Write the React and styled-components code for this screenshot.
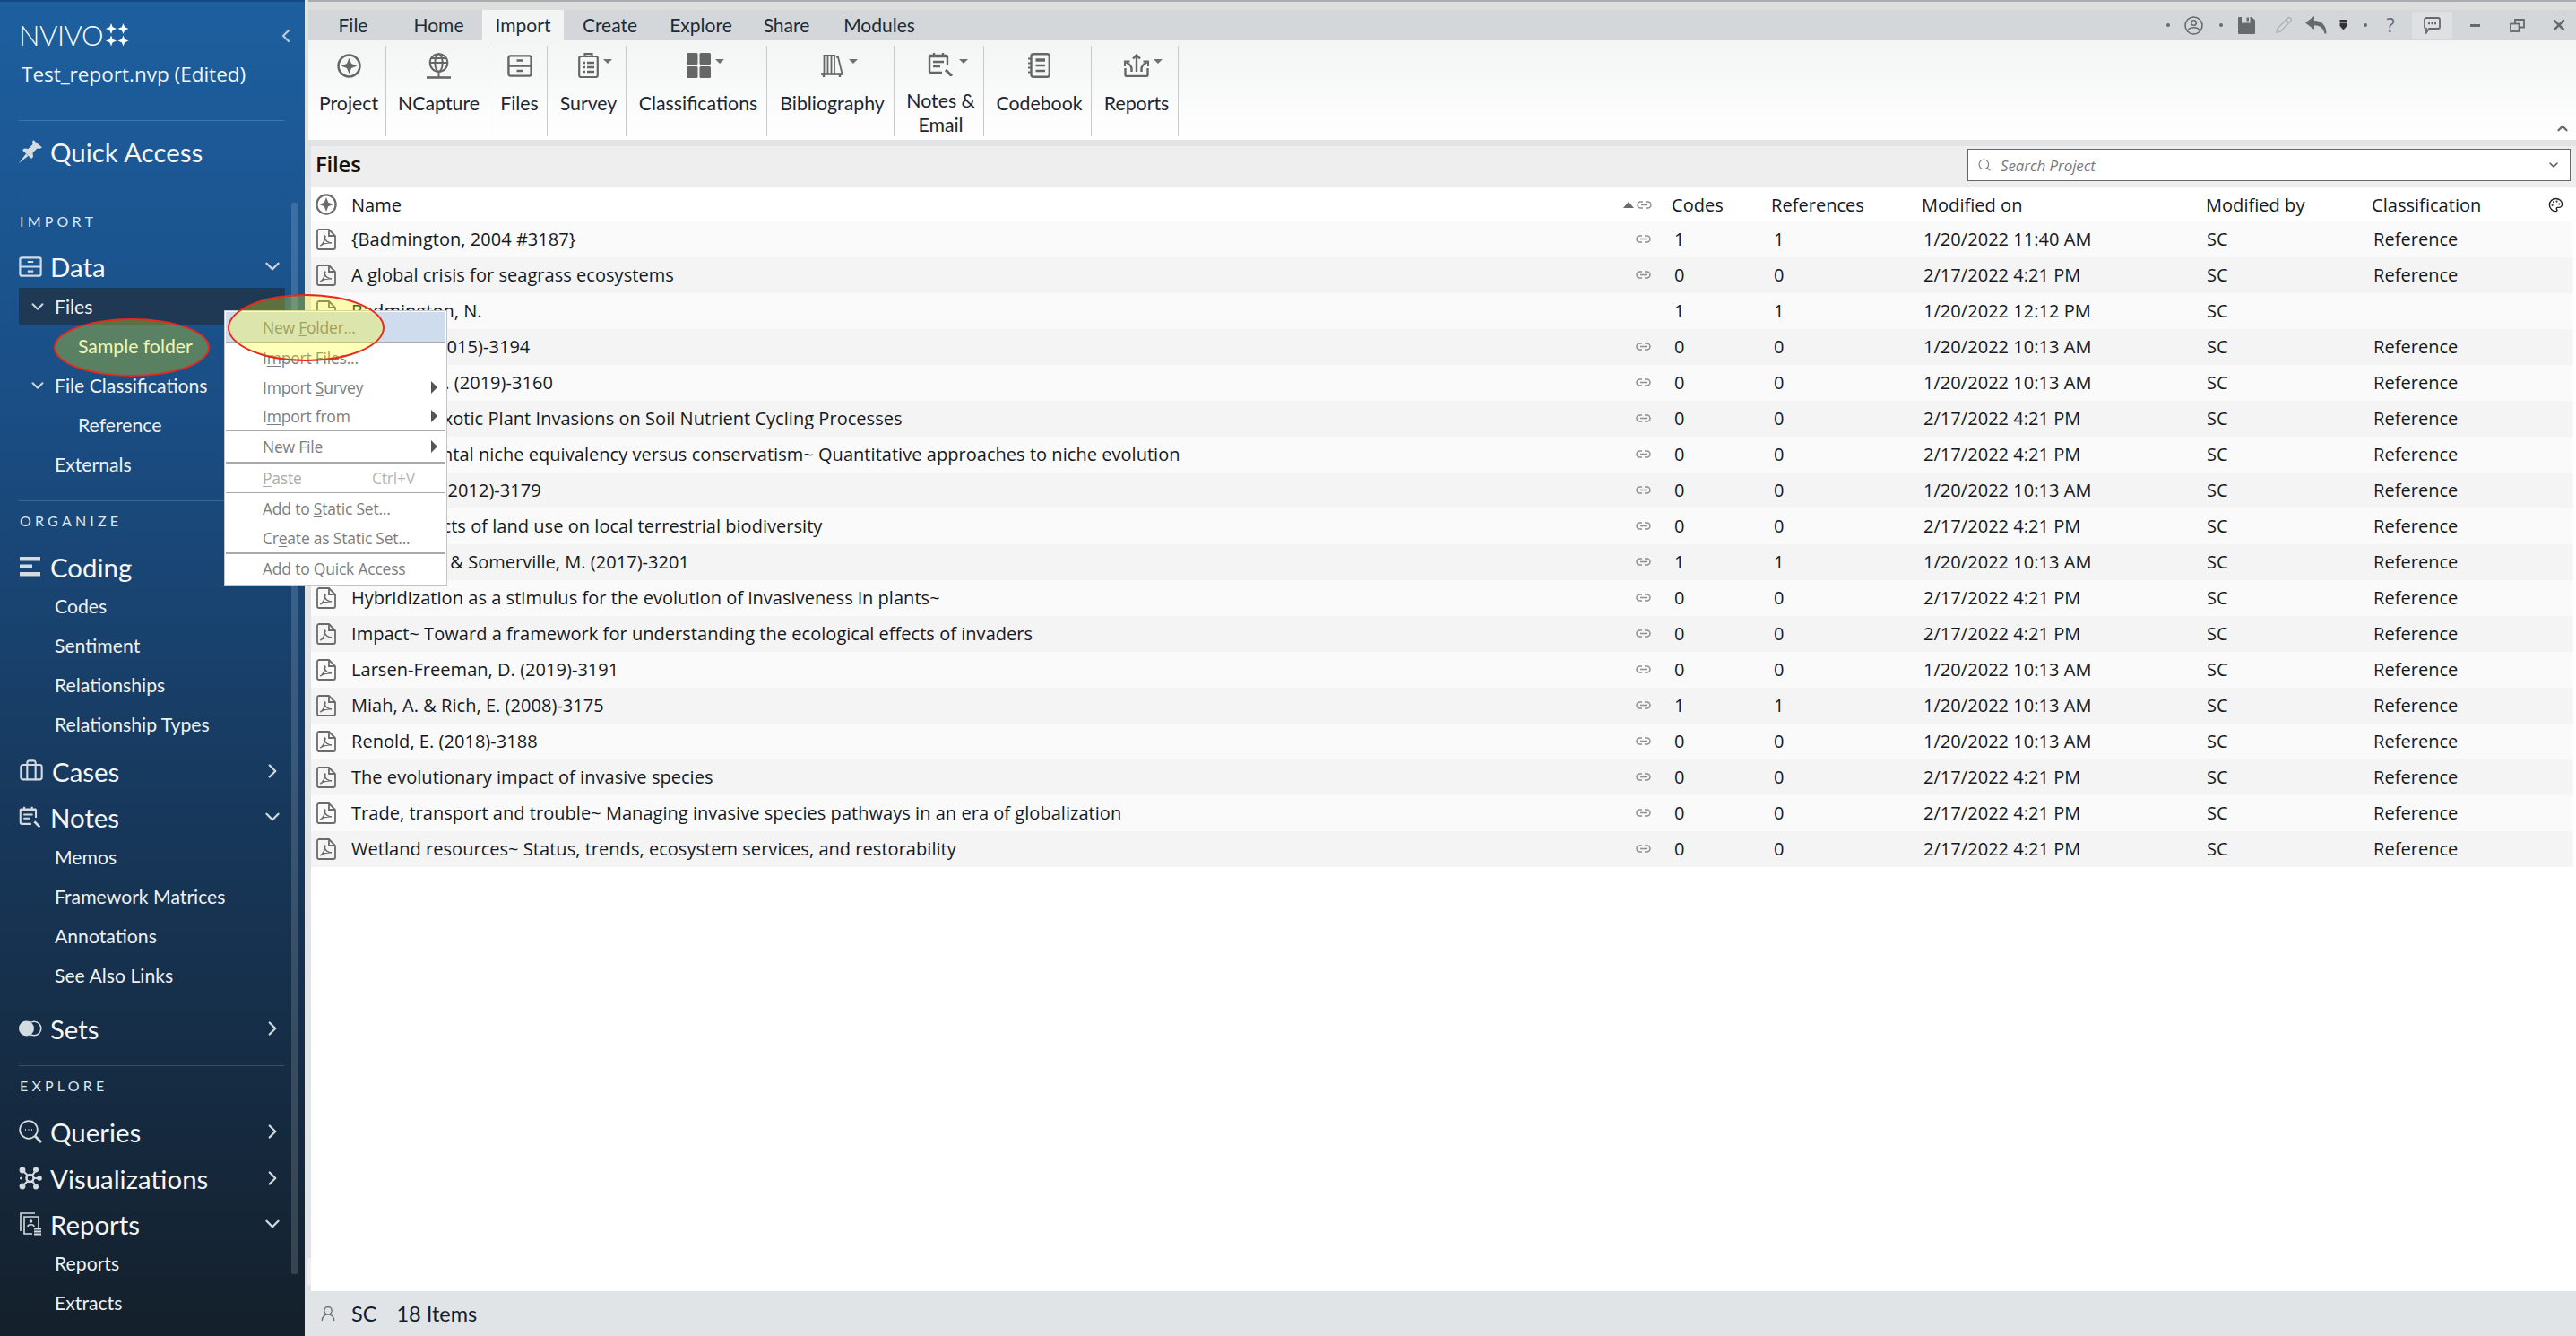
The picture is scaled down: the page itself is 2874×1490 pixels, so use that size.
import React from 'react';
import styled, { createGlobalStyle } from 'styled-components';
import { ChevronDown, ChevronRight, ChevronLeft, ChevronUp, Search, Palette, Pencil, X, Briefcase, UserRound } from 'lucide-react';

const ui = '"Open Sans", "Noto Sans", sans-serif';
const lato = 'Lato, "Open Sans", sans-serif';

const Global = createGlobalStyle`
  html, body { margin: 0; padding: 0; height: 100%; overflow: hidden; }
  #root { height: 100%; }
  * { box-sizing: border-box; }
  svg { flex-shrink: 0; }
`;

const Page = styled.div`
  position: relative;
  display: flex;
  height: 100vh;
  overflow: hidden;
  font-family: ${ui};
`;

/* sidebar */
const Side = styled.aside`
  position: relative;
  flex: 0 0 340px;
  padding-left: 21px;
  background: linear-gradient(180deg, #1d5f9f 0%, #1a4e85 30%, #17375a 62%, #14202b 100%);
  border-top: 2px solid #134a85;
  color: #f2f5f8;
  font-family: ${lato};
`;
const Brand = styled.div`
  height: 132px;
  padding-top: 21px;
`;
const LogoRow = styled.div`
  display: flex;
  align-items: center;
  gap: 3px;
  height: 32px;
  font-size: 31px;
  font-weight: 300;
  letter-spacing: -0.4px;
  color: #fff;
`;
const ProjectName = styled.div`
  margin: 12px 0 0 3px;
  font-family: ${ui};
  font-size: 22.5px;
  line-height: 32px;
`;
const Collapse = styled.span`
  position: absolute;
  left: 307px;
  top: 26px;
  color: #b9c8d8;
`;
const Divider = styled.div`
  width: 296px;
  height: 1px;
  margin-top: ${({ $gap }) => $gap || 0}px;
  background: rgba(255, 255, 255, 0.16);
`;
const SectionLabel = styled.div`
  height: 24px;
  margin-top: ${({ $gap }) => $gap}px;
  padding-left: 1px;
  font-size: 16px;
  line-height: 24px;
  letter-spacing: 4.2px;
  color: #dfe7ef;
`;
const Head = styled.div`
  display: flex;
  align-items: center;
  width: 297px;
  height: 46px;
  margin-top: ${({ $gap }) => $gap || 0}px;
  padding-bottom: 2px;
  font-size: 29.4px;
  color: #f4f6f8;
`;
const HeadIcon = styled.span`
  display: flex;
  justify-content: center;
  flex: 0 0 26px;
  margin-right: 9px;
  color: #d5dbe2;
`;
const HeadCaret = styled.span`
  display: flex;
  margin-left: auto;
  margin-right: 1px;
  color: #cfd6dd;
`;
const Sub = styled.div`
  display: flex;
  align-items: center;
  width: 297px;
  height: ${({ $active }) => ($active ? 41 : 44)}px;
  margin-bottom: ${({ $active }) => ($active ? 3 : 0)}px;
  margin-top: ${({ $gap }) => $gap || 0}px;
  padding-left: ${({ $deep }) => ($deep ? 66 : 40)}px;
  padding-bottom: ${({ $active }) => ($active ? 0 : 2)}px;
  background: ${({ $active }) => ($active ? '#1f3955' : 'transparent')};
  font-size: 21.2px;
  color: #eef1f4;
`;
const SubCaret = styled.span`
  display: flex;
  width: 22px;
  margin-left: -30px;
  margin-right: 8px;
  color: #cfd6dd;
`;
const ScrollThumb = styled.div`
  position: absolute;
  left: 325px;
  top: 224px;
  width: 7px;
  height: 1195px;
  border-radius: 2px;
  background: rgba(255, 255, 255, 0.15);
`;

/* main column */
const Main = styled.main`
  display: flex;
  flex: 1;
  flex-direction: column;
  min-width: 0;
  background: #e1e4e7;
`;
const TopStrip = styled.div`
  height: 11px;
  margin-left: 4px;
  background: #dcdddd;
  border-top: 2px solid #a9adb0;
`;
const TabBar = styled.div`
  display: flex;
  align-items: stretch;
  height: 34px;
  padding-left: 3px;
  margin-left: 4px;
  padding-right: 7px;
  background: #d4d7da;
  font-family: ${lato};
  font-size: 21px;
  color: #1d2b36;
`;
const Tab = styled.div`
  display: flex;
  justify-content: center;
  align-items: center;
  width: ${({ $w }) => $w}px;
  padding-bottom: 1px;
  background: ${({ $on }) => ($on ? '#f3f4f4' : 'transparent')};
`;
const WindowTools = styled.div`
  display: flex;
  align-items: center;
  margin-left: auto;
`;
const Tool = styled.span`
  display: flex;
  justify-content: center;
  align-items: center;
  width: ${({ $w }) => $w || 24}px;
  height: 31px;
  margin-left: ${({ $gap }) => $gap || 0}px;
  background: ${({ $on }) => ($on ? '#dfe0e1' : 'transparent')};
  color: ${({ $faint }) => ($faint ? '#a9abad' : '#666a6e')};
  font-family: ${ui};
  font-size: 21px;
`;
const Ribbon = styled.div`
  position: relative;
  display: flex;
  height: 111px;
  margin-left: 4px;
  padding: 6px 0 4px;
  background: linear-gradient(180deg, #f3f4f4 0%, #ffffff 100%);
  font-family: ${lato};
  font-size: 21.3px;
  color: #1d2630;
`;
const RibbonCell = styled.div`
  display: flex;
  flex-direction: column;
  align-items: center;
  width: ${({ $w }) => $w}px;
  padding-left: 4px;
  border-right: 1px solid #c9cacb;
  text-align: center;
  line-height: 25px;
`;
const IconSlot = styled.div`
  position: relative;
  display: flex;
  justify-content: center;
  align-items: center;
  height: 38px;
  margin: 3px 0 11px;
  color: #666;
`;
const Drop = styled.i`
  position: absolute;
  left: calc(100% + 5px);
  top: 12px;
  border-left: 5px solid transparent;
  border-right: 5px solid transparent;
  border-top: 5px solid #707070;
`;
const SecondLine = styled.span`
  margin-top: 2px;
`;
const Fold = styled.span`
  position: absolute;
  right: 6px;
  bottom: 4px;
  display: flex;
  color: #666;
`;

/* file list */
const Panel = styled.section`
  position: relative;
  display: flex;
  flex: 1;
  flex-direction: column;
  margin: 7px 0 0 7px;
  background: #fff;
`;
const TitleBar = styled.div`
  display: flex;
  justify-content: space-between;
  align-items: center;
  flex: 0 0 46px;
  padding: 0 6px 4px 5px;
  background: #eeeeee;
`;
const Title = styled.h2`
  margin: 0 0 4px;
  font-size: 24px;
  font-weight: 600;
  letter-spacing: -0.2px;
  color: #111;
`;
const SearchBox = styled.div`
  display: flex;
  align-items: center;
  width: 673px;
  height: 36px;
  padding: 0 10px;
  background: #fff;
  border: 1.5px solid #66696c;
  font-size: 17px;
  font-style: italic;
  color: #77797b;
`;
const SearchText = styled.span`
  margin-left: 10px;
  letter-spacing: -0.1px;
`;
const SearchCaret = styled.span`
  display: flex;
  margin-left: auto;
  color: #555;
`;
const Grid = styled.div`
  display: grid;
  grid-template-columns: 45px 1428px 45px 111px 168px 317px 185px 1fr 29px;
  align-items: center;
  margin-right: 3px;
  font-size: 20px;
  letter-spacing: 0.04px;
  color: #14191f;
`;
const HeaderRow = styled(Grid)`
  height: 38px;
  background: #fff;
`;
const Row = styled(Grid)`
  height: 40px;
  padding-bottom: 1px;
  background: ${({ $odd }) => ($odd ? '#fafafa' : '#f4f4f4')};
`;
const IconCell = styled.span`
  display: flex;
  justify-content: center;
  padding-right: 11px;
  color: ${({ $dark }) => ($dark ? '#222' : '#6b6b6b')};
`;
const Cell = styled.span`
  padding-left: ${({ $in }) => $in || 0}px;
  white-space: nowrap;
`;
const LinkCell = styled.span`
  display: flex;
  justify-content: flex-end;
  padding-right: 23px;
  color: #909090;
`;
const SortMark = styled.span`
  display: flex;
  align-items: center;
  justify-content: flex-end;
  gap: 3px;
  padding-right: 22px;
  color: #909090;
`;
const Triangle = styled.i`
  border-left: 6px solid transparent;
  border-right: 6px solid transparent;
  border-bottom: 7px solid #6b6b6b;
`;
const Grip = styled.div`
  position: absolute;
  left: -4px;
  bottom: 7px;
  width: 4px;
  height: 30px;
  background: #f0f0f0;
`;
const StatusBar = styled.footer`
  display: flex;
  align-items: center;
  flex: 0 0 50px;
  padding-left: 16px;
  font-family: ${lato};
  font-size: 23.5px;
  color: #14202c;
`;
const StatusUser = styled.span`
  display: flex;
  margin-right: 16px;
  color: #6f6f6f;
`;
const StatusCount = styled.span`
  margin-left: 22px;
`;

/* context menu and the marker strokes drawn over the shot */
const Menu = styled.div`
  position: absolute;
  left: 250px;
  top: 346px;
  width: 249px;
  height: 307px;
  padding: 1px;
  background: #fff;
  border: 1px solid #c5c5c5;
  font-size: 17.5px;
  letter-spacing: -0.22px;
  color: #7d7d7d;
`;
const MenuItem = styled.div`
  position: relative;
  display: flex;
  align-items: center;
  height: ${({ $h }) => $h || 32}px;
  padding-left: 41px;
  padding-right: 34px;
  background: ${({ $on }) => ($on ? '#cfdcee' : 'transparent')};
  color: ${({ $off }) => ($off ? '#ababab' : 'inherit')};
  u { text-underline-offset: 2px; }
`;
const MenuSep = styled.div`
  height: 1.5px;
  background: #a9a9a9;
`;
const Shortcut = styled.span`
  margin-left: auto;
  color: #b5b5b5;
`;
const SubArrow = styled.i`
  position: absolute;
  right: 9px;
  top: 50%;
  margin-top: -7px;
  border-top: 7px solid transparent;
  border-bottom: 7px solid transparent;
  border-left: 7px solid #555;
`;
const Marker = styled.div`
  position: absolute;
  border: 2px solid #e8291c;
  border-radius: 50%;
  background: rgba(255, 255, 0, 0.28);
  pointer-events: none;
`;
const FolderMarker = styled(Marker)`
  left: 60px;
  top: 355px;
  width: 174px;
  height: 65px;
`;
const MenuMarker = styled(Marker)`
  left: 254px;
  top: 328px;
  width: 175px;
  height: 75px;
`;

/* drawings */
const StarCircle = ({ size = 27 }) => (
  <svg width={size} height={size} viewBox="0 0 28 28" fill="none">
    <circle cx="14" cy="14" r="12.4" stroke="currentColor" strokeWidth="2.6" />
    <path d="M14 4.800 16.600 11.400 23.200 14 16.600 16.600 14 23.200 11.400 16.600 4.800 14 11.400 11.400z" fill="currentColor" />
  </svg>
);
const Globe = () => (
  <svg width="27" height="29" viewBox="0 0 27 29" fill="none" stroke="currentColor" strokeWidth="2">
    <circle cx="13.500" cy="11" r="9.800" />
    <ellipse cx="13.500" cy="11" rx="4.200" ry="9.800" />
    <path d="M3.700 11h19.600M5 6h17M13.500 21v6" />
    <path d="M0 27.500h27" strokeWidth="2.600" />
  </svg>
);
const Cabinet = ({ size = 28, height = 25 }) => (
  <svg width={size} height={height} viewBox="0 0 28 25" fill="none" stroke="currentColor" strokeWidth="2.4">
    <rect x="1.400" y="1.400" width="25.200" height="22.200" rx="2" />
    <path d="M1.400 12.500h25.200M10.500 6.500h7M10.500 18h7" />
  </svg>
);
const Survey = () => (
  <svg width="23" height="28" viewBox="0 0 23 28" fill="none" stroke="currentColor" strokeWidth="2.200">
    <rect x="1.200" y="4" width="20.600" height="23" rx="2" />
    <path d="M7.500 4V1.200h8V4" />
    <path d="M5 11h3M10 11h8M5 16h3M10 16h8M5 21h3M10 21h8" strokeWidth="2.300" />
  </svg>
);
const Squares = () => (
  <svg width="27" height="28" viewBox="0 0 27 28" fill="currentColor">
    <rect x="0" y="0" width="12.500" height="13" rx="1.500" />
    <rect x="14.500" y="0" width="12.500" height="13" rx="1.500" />
    <rect x="0" y="15" width="12.500" height="13" rx="1.500" />
    <rect x="14.500" y="15" width="12.500" height="13" rx="1.500" />
  </svg>
);
const Books = () => (
  <svg width="26" height="25" viewBox="0 0 26 25" fill="none" stroke="currentColor" strokeWidth="1.800">
    <path d="M3.500 21V1h4v20M7.500 21V1h4v20M11.500 21V1h3.500v20M17 3l2-.5 4.500 18.500" />
    <path d="M0 21.500h25" strokeWidth="2.600" />
    <path d="M3 22v3M21 22v3" strokeWidth="2.400" />
  </svg>
);
const NoteGlass = ({ size = 30 }) => (
  <svg width={size} height={size * 0.93} viewBox="0 0 30 28" fill="none" stroke="currentColor" strokeWidth="2.400">
    <path d="M16 23H3.500A1.500 1.500 0 0 1 2 21.500V5h20v10" />
    <path d="M7 1v5M17 1v5M2 4h20M6 11h12M6 16h8" />
    <path d="M20 20l7 7" strokeWidth="3" />
  </svg>
);
const Notebook = () => (
  <svg width="25" height="28" viewBox="0 0 25 28" fill="none" stroke="currentColor" strokeWidth="2.400">
    <rect x="3.500" y="1.200" width="20.300" height="25.600" rx="2.500" />
    <path d="M8.500 8h10.500" strokeWidth="3.500" />
    <path d="M8.500 14h10.500M8.500 20h10.500" />
    <path d="M0 6.500h4M0 11.500h4M0 16.500h4M0 21.500h4" strokeWidth="2" />
  </svg>
);
const Export = () => (
  <svg width="28" height="26" viewBox="0 0 28 26" fill="none" stroke="currentColor" strokeWidth="2.400">
    <path d="M1.500 16v7.500A1.500 1.500 0 0 0 3 25h22a1.500 1.500 0 0 0 1.500-1.500V16" />
    <path d="M14 20V2M10 5.500l4-4 4 4" />
    <path d="M8.500 20v-3c0-3-3-6-6-7.500M19.500 20v-3c0-3 3-6 6-7.500" />
    <path d="M1 14V8.500h5.500M27 14V8.500h-5.500" strokeWidth="2" />
  </svg>
);
const PdfDoc = ({ plain }) => (
  <svg width="22" height="24" viewBox="0 0 22 24" fill="none" stroke="currentColor" strokeWidth="1.800">
    <path d="M14 1H3a2 2 0 0 0-2 2v18a2 2 0 0 0 2 2h16a2 2 0 0 0 2-2V8z" />
    <path d="M14 1v7h7" />
    {!plain && <path d="M4 19c3-1 5-5 6-10 .3-1.800-1.500-1.500-1 .5 .8 3.500 3 6 8 6.500-4-.5-9 .5-13 3z" strokeWidth="1.300" />}
  </svg>
);
const ChainLink = () => (
  <svg width="17" height="9" viewBox="0 0 17 9" fill="none" stroke="currentColor" strokeWidth="1.500">
    <path d="M7 1H4.500a3.500 3.500 0 0 0 0 7H7M10 1h2.500a3.500 3.500 0 0 1 0 7H10M5 4.500h7" />
  </svg>
);
const Sparkles = () => (
  <svg width="26" height="26" viewBox="0 0 26 26" fill="#fff">
    <path d="M6 0l1.700 4.300L12 6 7.700 7.700 6 12 4.300 7.700 0 6l4.300-1.700z" />
    <path d="M19.500 0l1.700 4.300L25.500 6l-4.300 1.700L19.500 12l-1.700-4.300L13.500 6l4.300-1.700z" />
    <path d="M6 13.500l1.700 4.300L12 19.500l-4.300 1.700L6 25.500l-1.700-4.300L0 19.500l4.300-1.700z" />
    <path d="M19.500 13.500l1.700 4.300 4.300 1.700-4.300 1.700-1.700 4.300-1.700-4.300-4.300-1.700 4.300-1.700z" />
  </svg>
);
const PinIcon = () => (
  <svg width="26" height="26" viewBox="0 0 26 26" fill="currentColor">
    <path d="M16 0 26 8.500l-3 1.500-2.500-.5-5 5 .5 4.500-2 2L4 11.500l2-2 4.500.5 5-5-.5-2.500z" />
    <path d="M8 15.500 0 26l10.500-8z" />
  </svg>
);
const Bars = () => (
  <svg width="24" height="22" viewBox="0 0 24 22" fill="currentColor">
    <rect x="0" y="0" width="23" height="4.500" />
    <rect x="0" y="8.500" width="14" height="4.500" />
    <rect x="0" y="17" width="23" height="4.500" />
  </svg>
);
const SetCircles = () => (
  <svg width="26" height="18" viewBox="0 0 26 18">
    <circle cx="17" cy="9" r="7.800" fill="none" stroke="currentColor" strokeWidth="1.600" />
    <circle cx="8.500" cy="9" r="8.500" fill="currentColor" />
  </svg>
);
const QueryGlass = () => (
  <svg width="26" height="26" viewBox="0 0 26 26" fill="none" stroke="currentColor" strokeWidth="1.800">
    <circle cx="11" cy="11" r="9.800" />
    <path d="M18 18l7 7" strokeWidth="2.800" />
    <path d="M7 11h.800M10.600 11h.800M14.200 11h.800" strokeWidth="1.800" />
  </svg>
);
const NodeMap = () => (
  <svg width="26" height="26" viewBox="0 0 26 26" fill="currentColor">
    <circle cx="4" cy="4" r="3.400" /><circle cx="19" cy="3.500" r="3" />
    <circle cx="23" cy="13" r="2.800" /><circle cx="4" cy="22" r="3.400" /><circle cx="19" cy="22.500" r="3" />
    <circle cx="2.500" cy="13" r="1.500" />
    <circle cx="12.500" cy="13" r="4" fill="none" stroke="currentColor" strokeWidth="2.500" />
    <path d="M4 4l6 6M19 4l-4 6M23 13h-7M4 22l6-6M19 22l-4-6" stroke="currentColor" strokeWidth="2.200" />
  </svg>
);
const ReportStack = () => (
  <svg width="26" height="26" viewBox="0 0 26 26" fill="none" stroke="currentColor" strokeWidth="1.600">
    <path d="M2 21V1h16" />
    <path d="M15 24H6V5h16v12" />
    <circle cx="13.500" cy="10" r="1.800" fill="currentColor" stroke="none" />
    <path d="M10 16c0-3 7-3 7 0" />
    <path d="M17 18.500h8M17 21.500h8M17 24.500h8" strokeWidth="2" />
  </svg>
);
const Floppy = () => (
  <svg width="19" height="19" viewBox="0 0 19 19" fill="currentColor">
    <path d="M1 0h3v6.500h9.500V0h1.500L19 3.500V18a1 1 0 0 1-1 1H1a1 1 0 0 1-1-1V1a1 1 0 0 1 1-1z" />
    <rect x="9.500" y="0.500" width="2.500" height="4" />
  </svg>
);
const UndoArrow = () => (
  <svg width="24" height="20" viewBox="0 0 24 20" fill="currentColor">
    <path d="M10 0 0 7.500 10 15v-4.800c6 0 10 2.800 11.500 9.300h2C23.500 10 18 5 10 5z" />
  </svg>
);
const PenMark = () => (
  <svg width="9" height="12" viewBox="0 0 9 12" fill="#333">
    <rect x="0.500" y="0" width="8" height="2" />
    <path d="M0.500 3.500h8V7L4.500 11.500.5 7z" />
  </svg>
);
const Dot = () => (
  <svg width="6" height="6" viewBox="0 0 6 6"><circle cx="3" cy="3" r="2" fill="currentColor" /></svg>
);
const UserCircle = () => (
  <svg width="21" height="21" viewBox="0 0 21 21" fill="none" stroke="currentColor" strokeWidth="1.600">
    <circle cx="10.500" cy="10.500" r="9.500" />
    <circle cx="10.500" cy="7.500" r="2.800" />
    <path d="M3.500 16.500c1.500-3 3.500-3.800 7-3.800s5.500.8 7 3.800" />
  </svg>
);
const Comment = () => (
  <svg width="19" height="19" viewBox="0 0 19 19" fill="none" stroke="currentColor" strokeWidth="1.800">
    <path d="M3 1h13a2 2 0 0 1 2 2v8a2 2 0 0 1-2 2H6l-3 4.500V13a2 2 0 0 1-2-2V3a2 2 0 0 1 2-2z" />
    <path d="M5 7h2M8.500 7h2M12 7h2" strokeWidth="2.400" />
  </svg>
);
const Restore = () => (
  <svg width="17" height="15" viewBox="0 0 17 15" fill="none" stroke="currentColor" strokeWidth="1.800">
    <rect x="1" y="5.500" width="9.500" height="8.500" />
    <path d="M6 5.500V1h10v8.500h-5.500" />
  </svg>
);

const ribbon = [
  { w: 87, label: 'Project', icon: <StarCircle /> },
  { w: 114, label: 'NCapture', icon: <Globe /> },
  { w: 66, label: 'Files', icon: <Cabinet /> },
  { w: 88, label: 'Survey', icon: <Survey />, drop: true },
  { w: 157, label: 'Classifications', icon: <Squares />, drop: true },
  { w: 142, label: 'Bibliography', icon: <Books />, drop: true },
  { w: 100, label: 'Notes &', second: 'Email', icon: <NoteGlass />, drop: true },
  { w: 120, label: 'Codebook', icon: <Notebook /> },
  { w: 97, label: 'Reports', icon: <Export />, drop: true },
];

const tabs = [
  ['File', 94], ['Home', 97], ['Import', 91, true], ['Create', 103],
  ['Explore', 100], ['Share', 91], ['Modules', 116],
];

const OLD = '1/20/2022 10:13 AM';
const NEW = '2/17/2022 4:21 PM';
const rows = [
  ['{Badmington, 2004 #3187}', 1, '1/20/2022 11:40 AM'],
  ['A global crisis for seagrass ecosystems', 0, NEW],
  ['Badmington, N.', 1, '1/20/2022 12:12 PM', 'plain'],
  ['Bauer, K. (2015)-3194', 0, OLD],
  ['Campbell, J. (2019)-3160', 0, OLD],
  ['Effects of Exotic Plant Invasions on Soil Nutrient Cycling Processes', 0, NEW],
  ['Environmental niche equivalency versus conservatism~ Quantitative approaches to niche evolution', 0, NEW],
  ['Fowler, M. (2012)-3179', 0, OLD],
  ['Global effects of land use on local terrestrial biodiversity', 0, NEW],
  ['Hobbs, R. J. & Somerville, M. (2017)-3201', 1, OLD],
  ['Hybridization as a stimulus for the evolution of invasiveness in plants~', 0, NEW],
  ['Impact~ Toward a framework for understanding the ecological effects of invaders', 0, NEW],
  ['Larsen-Freeman, D. (2019)-3191', 0, OLD],
  ['Miah, A. & Rich, E. (2008)-3175', 1, OLD],
  ['Renold, E. (2018)-3188', 0, OLD],
  ['The evolutionary impact of invasive species', 0, NEW],
  ['Trade, transport and trouble~ Managing invasive species pathways in an era of globalization', 0, NEW],
  ['Wetland resources~ Status, trends, ecosystem services, and restorability', 0, NEW],
];

const NavHead = ({ icon, caret, gap, children }) => (
  <Head $gap={gap}>
    <HeadIcon>{icon}</HeadIcon>
    {children}
    {caret === 'down' && <HeadCaret><ChevronDown size={26} strokeWidth={2.2} /></HeadCaret>}
    {caret === 'right' && <HeadCaret><ChevronRight size={26} strokeWidth={2.2} /></HeadCaret>}
  </Head>
);

const Sidebar = () => (
  <Side>
    <Brand>
      <LogoRow>NVIVO<Sparkles /></LogoRow>
      <ProjectName>Test_report.nvp (Edited)</ProjectName>
    </Brand>
    <Collapse><ChevronLeft size={24} strokeWidth={2.4} /></Collapse>
    <Divider />
    <NavHead gap={12} icon={<PinIcon />}>Quick Access</NavHead>
    <Divider $gap={24} />
    <SectionLabel $gap={17}>IMPORT</SectionLabel>
    <NavHead gap={16} icon={<Cabinet size={26} height={23} />} caret="down">Data</NavHead>
    <Sub $active><SubCaret><ChevronDown size={22} strokeWidth={2.2} /></SubCaret>Files</Sub>
    <Sub $deep>Sample folder</Sub>
    <Sub><SubCaret><ChevronDown size={22} strokeWidth={2.2} /></SubCaret>File Classifications</Sub>
    <Sub $deep>Reference</Sub>
    <Sub>Externals</Sub>
    <Divider $gap={17} />
    <SectionLabel $gap={10}>ORGANIZE</SectionLabel>
    <NavHead gap={17} icon={<Bars />}>Coding</NavHead>
    <Sub $gap={-1}>Codes</Sub>
    <Sub>Sentiment</Sub>
    <Sub>Relationships</Sub>
    <Sub>Relationship Types</Sub>
    <NavHead gap={7} icon={<Briefcase size={28} strokeWidth={1.8} />} caret="right">Cases</NavHead>
    <NavHead gap={5} icon={<NoteGlass size={26} />} caret="down">Notes</NavHead>
    <Sub>Memos</Sub>
    <Sub>Framework Matrices</Sub>
    <Sub>Annotations</Sub>
    <Sub>See Also Links</Sub>
    <NavHead gap={14} icon={<SetCircles />} caret="right">Sets</NavHead>
    <Divider $gap={17} />
    <SectionLabel $gap={10}>EXPLORE</SectionLabel>
    <NavHead gap={17} icon={<QueryGlass />} caret="right">Queries</NavHead>
    <NavHead gap={6} icon={<NodeMap />} caret="right">Visualizations</NavHead>
    <NavHead gap={5} icon={<ReportStack />} caret="down">Reports</NavHead>
    <Sub $gap={-1}>Reports</Sub>
    <Sub>Extracts</Sub>
    <ScrollThumb />
  </Side>
);

const ContextMenu = () => (
  <Menu>
    <MenuItem $on $h={33}><span>New <u>F</u>older...</span></MenuItem>
    <MenuSep />
    <MenuItem $h={33}><span>I<u>m</u>port Files...</span></MenuItem>
    <MenuItem><span>Import <u>S</u>urvey</span><SubArrow /></MenuItem>
    <MenuItem><span>I<u>m</u>port from</span><SubArrow /></MenuItem>
    <MenuSep />
    <MenuItem $h={34}><span>Ne<u>w</u> File</span><SubArrow /></MenuItem>
    <MenuSep />
    <MenuItem $off><span><u>P</u>aste</span><Shortcut>Ctrl+V</Shortcut></MenuItem>
    <MenuSep />
    <MenuItem $h={34}><span>Add to <u>S</u>tatic Set...</span></MenuItem>
    <MenuItem><span>Cr<u>e</u>ate as Static Set...</span></MenuItem>
    <MenuSep />
    <MenuItem $h={33}><span>Add to <u>Q</u>uick Access</span></MenuItem>
  </Menu>
);

export default function App() {
  return (
    <Page>
      <Global />
      <Sidebar />
      <Main>
        <TopStrip />
        <TabBar>
          {tabs.map(([name, w, on]) => <Tab key={name} $w={w} $on={on}>{name}</Tab>)}
          <WindowTools>
            <Tool><Dot /></Tool>
            <Tool $gap={4}><UserCircle /></Tool>
            <Tool $gap={7}><Dot /></Tool>
            <Tool $gap={4}><Floppy /></Tool>
            <Tool $gap={18} $faint><Pencil size={20} strokeWidth={1.3} /></Tool>
            <Tool $gap={12}><UndoArrow /></Tool>
            <Tool $gap={6}><PenMark /></Tool>
            <Tool $gap={1}><Dot /></Tool>
            <Tool $gap={4}>?</Tool>
            <Tool $gap={12} $w={45} $on><Comment /></Tool>
            <Tool $gap={13}><svg width="11" height="3"><rect width="11" height="3" fill="currentColor" /></svg></Tool>
            <Tool $gap={23}><Restore /></Tool>
            <Tool $gap={23}><X size={20} strokeWidth={3} /></Tool>
          </WindowTools>
        </TabBar>
        <Ribbon>
          {ribbon.map((r) => (
            <RibbonCell key={r.label} $w={r.w}>
              <IconSlot>{r.icon}{r.drop && <Drop />}</IconSlot>
              {r.label}
              {r.second && <SecondLine>{r.second}</SecondLine>}
            </RibbonCell>
          ))}
          <Fold><ChevronUp size={18} strokeWidth={3} /></Fold>
        </Ribbon>
        <Panel>
          <TitleBar>
            <Title>Files</Title>
            <SearchBox>
              <Search size={16} strokeWidth={1.6} />
              <SearchText>Search Project</SearchText>
              <SearchCaret><ChevronDown size={16} strokeWidth={2.2} /></SearchCaret>
            </SearchBox>
          </TitleBar>
          <HeaderRow>
            <IconCell><StarCircle size={24} /></IconCell>
            <Cell>Name</Cell>
            <SortMark><Triangle /><ChainLink /></SortMark>
            <Cell>Codes</Cell>
            <Cell>References</Cell>
            <Cell>Modified on</Cell>
            <Cell>Modified by</Cell>
            <Cell>Classification</Cell>
            <IconCell $dark><Palette size={17} strokeWidth={2} /></IconCell>
          </HeaderRow>
          {rows.map(([name, n, date, kind], i) => (
            <Row key={name} $odd={i % 2 === 0}>
              <IconCell><PdfDoc plain={kind === 'plain'} /></IconCell>
              <Cell>{name}</Cell>
              <LinkCell>{kind !== 'plain' && <ChainLink />}</LinkCell>
              <Cell $in={3}>{n}</Cell>
              <Cell $in={3}>{n}</Cell>
              <Cell $in={2}>{date}</Cell>
              <Cell $in={1}>SC</Cell>
              <Cell $in={2}>{kind === 'plain' ? '' : 'Reference'}</Cell>
              <span />
            </Row>
          ))}
          <Grip />
        </Panel>
        <StatusBar>
          <StatusUser><UserRound size={20} strokeWidth={1.7} /></StatusUser>
          SC
          <StatusCount>18 Items</StatusCount>
        </StatusBar>
      </Main>
      <ContextMenu />
      <FolderMarker />
      <MenuMarker />
    </Page>
  );
}
